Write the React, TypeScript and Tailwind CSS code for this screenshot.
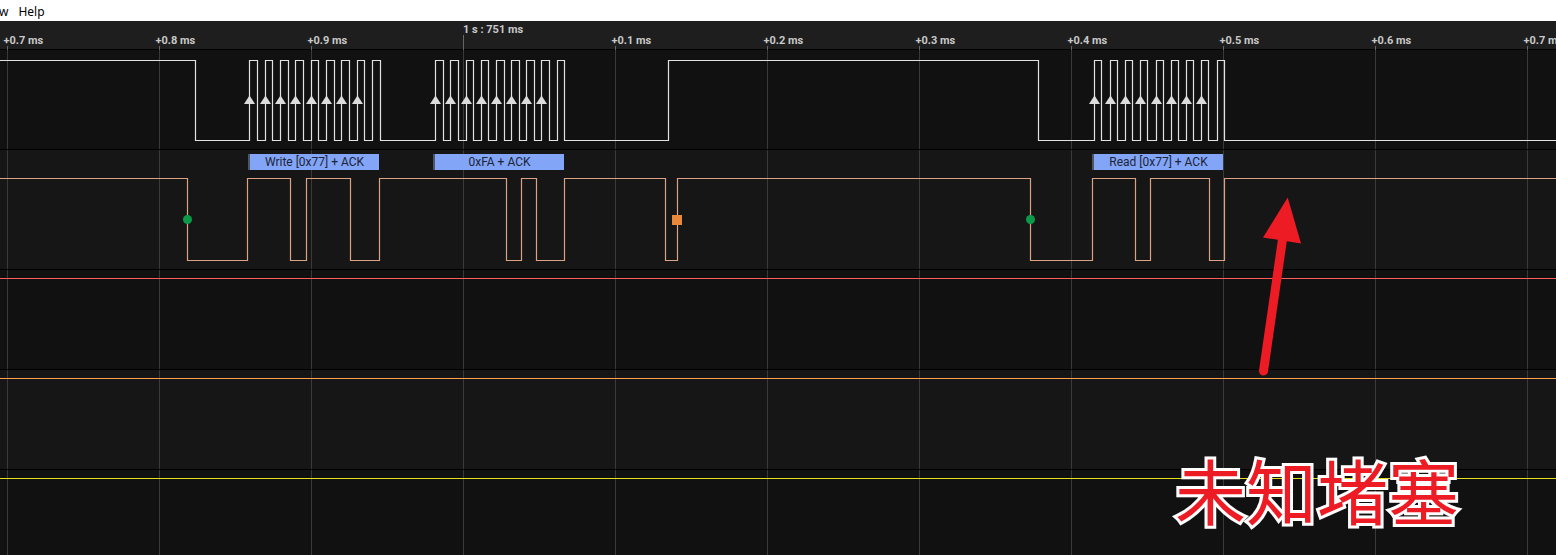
import React from "react";

const W = 1556;
const GRID = [7.5, 159.5, 311.5, 463.5, 615.5, 767.5, 919.5, 1071.5, 1223.5, 1375.5, 1527.5];
const TICKS = [
  { x: 7.5, t: "+0.7 ms" },
  { x: 159.5, t: "+0.8 ms" },
  { x: 311.5, t: "+0.9 ms" },
  { x: 615.5, t: "+0.1 ms" },
  { x: 767.5, t: "+0.2 ms" },
  { x: 919.5, t: "+0.3 ms" },
  { x: 1071.5, t: "+0.4 ms" },
  { x: 1223.5, t: "+0.5 ms" },
  { x: 1375.5, t: "+0.6 ms" },
  { x: 1527.5, t: "+0.7 ms" },
];

// nine clock pulses, rise -> fall
function clockByte(start: number, period: number, high: number) {
  const out: number[] = [];
  for (let i = 0; i < 9; i++) {
    const r = Math.round(start + i * period) + 0.5;
    out.push(r, Math.round(start + i * period + high) + 0.5);
  }
  return out;
}

const b1 = clockByte(249.3, 15.33, 7.8);
const b2 = clockByte(435.3, 15.17, 7.6);
const b3 = clockByte(1094.3, 15.3, 7);
const SCL_EDGES = [195.5, ...b1, ...b2, 668.5, 1038.5, ...b3];
const SDA_EDGES = [
  187.5, 247.5, 290.5, 306.5, 350.5, 379.5, 506.5, 521.5, 536.5, 564.5, 665.5, 677.5,
  1030.5, 1092.5, 1135.5, 1150.5, 1209.5, 1224.5,
];

function wavePath(edges: number[], hi: number, lo: number) {
  let y = hi;
  let d = `M0 ${y}`;
  for (const x of edges) {
    d += ` H${x}`;
    y = y === hi ? lo : hi;
    d += ` V${y}`;
  }
  return d + ` H${W}`;
}

function Grid({ y0, h }: { y0: number; h: number }) {
  return (
    <>
      {GRID.map((x) => (
        <line key={x} x1={x} x2={x} y1={y0} y2={y0 + h} stroke="#3a3a3a" strokeWidth={1} />
      ))}
    </>
  );
}

function Row({ top, h, bg, children }: { top: number; h: number; bg: string; children?: React.ReactNode }) {
  return (
    <div className={`relative border-b border-black ${bg}`} style={{ height: h }}>
      <svg className="absolute inset-0" width={W} height={h - 1} viewBox={`0 ${top} ${W} ${h - 1}`}>
        <Grid y0={top} h={h} />
        {children}
      </svg>
    </div>
  );
}

function Frame({ left, width, text }: { left: number; width: number; text: string }) {
  return (
    <div
      className="absolute top-[4px] h-[16px] bg-[#82a5f7] border-l-2 border-[#4d5566] text-[#1d2436] text-[12px] leading-[16px] text-center"
      style={{ left, width, fontFamily: "Roboto, sans-serif" }}
    >
      {text}
    </div>
  );
}

export default function App() {
  const rises = [...b1.filter((_, i) => i % 2 === 0).slice(0, 8), ...b2.filter((_, i) => i % 2 === 0).slice(0, 8), ...b3.filter((_, i) => i % 2 === 0).slice(0, 8)];
  return (
    <div className="relative w-[1556px] h-[555px] overflow-hidden bg-[#111111]">
      <div className="h-[21px] bg-white flex items-center gap-[10px] pt-[2px] text-[12px] text-black" style={{ fontFamily: "'Noto Sans', sans-serif" }}>
        <span className="-ml-[1px]">w</span>
        <span>Help</span>
      </div>

      <div className="relative h-[29px] bg-[#1e1e1e] border-b border-black text-[#c9c9c9] text-[11px] font-bold" style={{ fontFamily: "Roboto, sans-serif" }}>
        {TICKS.map((k) => (
          <React.Fragment key={k.x}>
            <span className="absolute top-[13px] leading-[14px] whitespace-nowrap" style={{ left: k.x - 4 }}>
              {k.t}
            </span>
            <div className="absolute top-[25px] w-px h-[4px] bg-[#666]" style={{ left: k.x - 0.5 }} />
          </React.Fragment>
        ))}
        <span className="absolute top-[2px] left-[463px] leading-[14px] whitespace-nowrap">1 s : 751 ms</span>
        <div className="absolute top-[14px] left-[463px] w-px h-[15px] bg-[#666]" />
      </div>

      <Row top={50} h={100} bg="bg-[#111111]">
        <path d={wavePath(SCL_EDGES, 60.5, 140.5)} fill="none" stroke="#e2e2e2" strokeWidth={1.2} />
        {rises.map((x) => (
          <polygon key={x} points={`${x},95.5 ${x - 5.5},104 ${x + 5.5},104`} fill="#dcdcdc" />
        ))}
      </Row>

      <div className="relative">
        <Row top={150} h={120} bg="bg-[#161616]">
          <path d={wavePath(SDA_EDGES, 178.5, 260.5)} fill="none" stroke="#dba283" strokeWidth={1.2} />
          <circle cx={187.5} cy={219.5} r={4.5} fill="#0c9a4a" />
          <circle cx={1030.5} cy={219.5} r={4.5} fill="#0c9a4a" />
          <rect x={672} y={215} width={10} height={10} fill="#e8883a" />
        </Row>
        <Frame left={248} width={131} text="Write [0x77] + ACK" />
        <Frame left={433} width={131} text="0xFA + ACK" />
        <Frame left={1092} width={131} text="Read [0x77] + ACK" />
      </div>

      <Row top={270} h={100} bg="bg-[#111111]">
        <line x1={0} x2={W} y1={278.5} y2={278.5} stroke="#ff5c5c" strokeWidth={1} />
      </Row>
      <Row top={370} h={100} bg="bg-[#161616]">
        <line x1={0} x2={W} y1={378.5} y2={378.5} stroke="#ffa347" strokeWidth={1} />
      </Row>
      <Row top={470} h={86} bg="bg-[#111111]">
        <line x1={0} x2={W} y1={478.5} y2={478.5} stroke="#e6e21a" strokeWidth={1} />
      </Row>

      {/* annotation */}
      <svg className="absolute inset-0 pointer-events-none" width={W} height={555}>
        <line x1={1283} y1={236} x2={1263.5} y2={371} stroke="#ed1c24" strokeWidth={9} strokeLinecap="round" />
        <polygon points="1287.7,197.5 1263,237.5 1301,243.5" fill="#ed1c24" />
      </svg>
      <div
        className="absolute left-[1175px] top-[453px] text-[71px] leading-none text-[#ed1c24] whitespace-nowrap [paint-order:stroke_fill] [-webkit-text-stroke:6px_white]"
        style={{ fontFamily: "'Noto Sans CJK SC', sans-serif" }}
      >
        未知堵塞
      </div>
    </div>
  );
}
